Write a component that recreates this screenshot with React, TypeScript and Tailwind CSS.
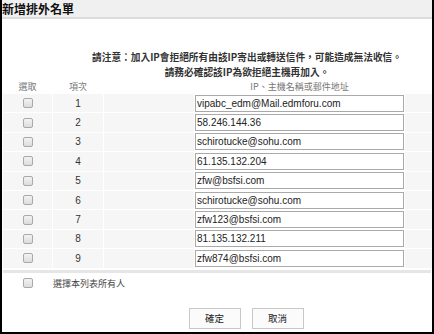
const entries = [
  "vipabc_edm@Mail.edmforu.com",
  "58.246.144.36",
  "schirotucke@sohu.com",
  "61.135.132.204",
  "zfw@bsfsi.com",
  "schirotucke@sohu.com",
  "zfw123@bsfsi.com",
  "81.135.132.211",
  "zfw874@bsfsi.com",
]

const cjk = { fontFamily: '"Noto Sans CJK TC", "Noto Sans", sans-serif' }
const latin = { fontFamily: '"Liberation Sans", Arial, sans-serif' }

function Checkbox() {
  return (
    <div className="w-[10px] h-[10px] rounded-[2px] border border-[#a9a9a9] bg-gradient-to-b from-[#f3f3f3] to-[#dcdcdc]" />
  )
}

export default function App() {
  return (
    <div className="w-[434px] h-[334px] bg-white border-x-2 border-b-2 border-black flex flex-col" style={cjk}>
      {/* title bar */}
      <div className="h-[19px] shrink-0 bg-[#f0f0f0] border-b-2 border-[#dcdcdc] text-[12px] leading-[17px] font-bold text-[#111]">
        新增排外名單
      </div>

      {/* notice */}
      <div className="pt-[31px] pl-[60px] text-center text-[9.7px] leading-[15px] font-bold text-[#333]">
        <p>請注意：加入IP會拒絕所有由該IP寄出或轉送信件，可能造成無法收信。</p>
        <p>請務必確認該IP為欲拒絕主機再加入。</p>
      </div>

      {/* header */}
      <div className="grid grid-cols-[49px_50px_90px_209px_1fr] gap-x-[1px] pl-[1px] h-[13px] items-center text-[9px] text-[#777] leading-none">
        <div className="text-center">選取</div>
        <div className="text-center">項次</div>
        <div />
        <div className="text-center">IP、主機名稱或郵件地址</div>
        <div />
      </div>

      {/* rows */}
      <div className="flex flex-col gap-[1px] mt-[1px]">
        {entries.map((value, i) => (
          <div
            key={i}
            className="grid grid-cols-[49px_50px_90px_209px_1fr] gap-x-[1px] pl-[1px] h-[18.4px]"
          >
            <div className="bg-[#f6f6f6] flex items-center justify-center">
              <Checkbox />
            </div>
            <div className="bg-[#f6f6f6] flex items-center justify-center text-[10px] text-[#333]" style={latin}>
              {i + 1}
            </div>
            <div className="bg-[#f6f6f6]" />
            <div className="flex items-center">
              <input
                readOnly
                value={value}
                className="w-full h-[17px] border border-[#a9a9a9] bg-white pl-[1px] text-[10px] text-[#222] outline-none"
                style={latin}
              />
            </div>
            <div className="bg-[#f6f6f6]" />
          </div>
        ))}
      </div>

      {/* separator */}
      <div className="mt-[2.5px] h-[3px] mx-[1px] bg-[#e6e6e6]" />

      {/* select all */}
      <div className="grid grid-cols-[49px_1fr] gap-x-[1px] pl-[1px] mt-[1px] h-[18px] items-center">
        <div className="flex justify-center">
          <Checkbox />
        </div>
        <div className="text-[9px] text-[#444] leading-none">選擇本列表所有人</div>
      </div>

      {/* buttons */}
      <div className="mt-[16px] pl-[58px] flex justify-center gap-[11px]">
        <button className="w-[52px] h-[21px] border border-[#c8c8c8] bg-[#fbfbfb] text-[9.5px] text-[#222]">
          確定
        </button>
        <button className="w-[52px] h-[21px] border border-[#c8c8c8] bg-[#fbfbfb] text-[9.5px] text-[#222]">
          取消
        </button>
      </div>
    </div>
  )
}
